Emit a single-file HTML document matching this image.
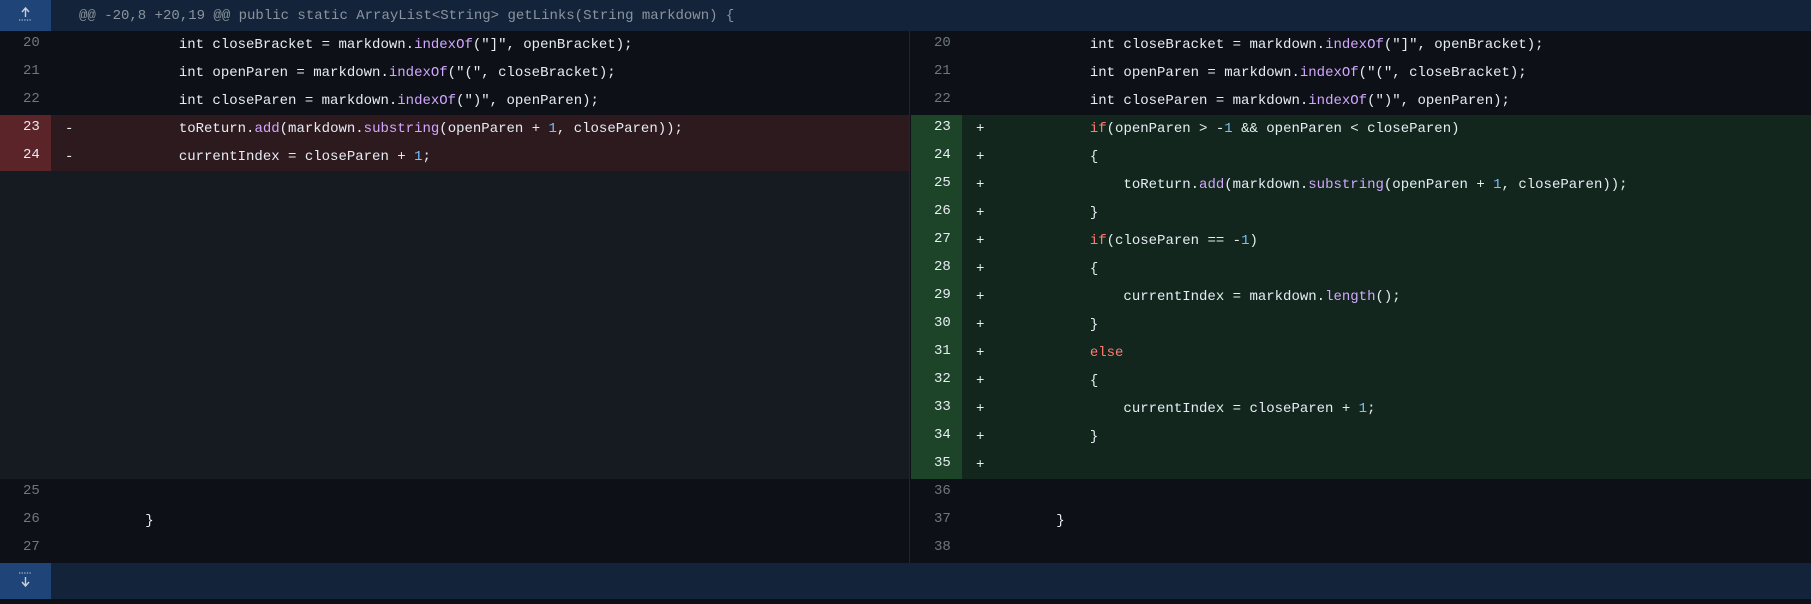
<!DOCTYPE html>
<html><head><meta charset="utf-8"><style>
*{margin:0;padding:0;box-sizing:border-box}
body{width:1811px;height:602px;background:#0d1117;overflow:hidden;font-family:"Liberation Mono",monospace;font-size:14px;color:#e6edf3}
.hdr{position:absolute;left:0;width:1811px;background:#132339}
.btn{position:absolute;left:0;top:0;width:51px;height:100%;background:#1f4478}
.ht{position:absolute;left:79px;top:8px;color:#8b949e;white-space:pre}
.side{position:absolute;top:31px;height:532px}
.row{height:28px;position:relative;white-space:pre}
.n{position:absolute;left:0;top:0;width:51px;height:28px;color:#6e7681;padding-left:23px;line-height:24px}
.s{position:absolute;left:65px;top:0;line-height:28px}
.c{position:absolute;left:78px;top:0;line-height:28px}
.del{background:#2d1a1f}.del .n{background:#5a2428;color:#e6edf3}
.add{background:#12261e}.add .n{background:#1d4428;color:#e6edf3}
.fill{background:#161b22}
.k{color:#d2a8ff}.r{color:#ff7b72}.b{color:#79c0ff}
</style></head><body>
<div class="hdr" style="top:0;height:31px"><div class="btn"><svg width="51" height="31"><path d="M25.5 9v8M22 12l3.5-4 3.5 4" stroke="#c9d1d9" stroke-width="1.4" fill="none"/><path d="M19 20h13" stroke="#c9d1d9" stroke-width="1" stroke-dasharray="1.3 1.3"/></svg></div><div class="ht">@@ -20,8 +20,19 @@ public static ArrayList&lt;String&gt; getLinks(String markdown) {</div></div>

<div class="side" style="left:0;width:910px;border-right:1px solid #21262d">
<div class="row"><div class="n">20</div><div class="c">            int closeBracket = markdown.<span class="k">indexOf</span>("]", openBracket);</div></div>
<div class="row"><div class="n">21</div><div class="c">            int openParen = markdown.<span class="k">indexOf</span>("(", closeBracket);</div></div>
<div class="row"><div class="n">22</div><div class="c">            int closeParen = markdown.<span class="k">indexOf</span>(")", openParen);</div></div>
<div class="row del"><div class="n">23</div><div class="s">-</div><div class="c">            toReturn.<span class="k">add</span>(markdown.<span class="k">substring</span>(openParen + <span class="b">1</span>, closeParen));</div></div>
<div class="row del"><div class="n">24</div><div class="s">-</div><div class="c">            currentIndex = closeParen + <span class="b">1</span>;</div></div>
<div class="fill" style="height:308px"></div>
<div class="row"><div class="n">25</div></div>
<div class="row"><div class="n">26</div><div class="c">        }</div></div>
<div class="row"><div class="n">27</div></div>
</div>

<div class="side" style="left:911px;width:900px">
<div class="row"><div class="n">20</div><div class="c">            int closeBracket = markdown.<span class="k">indexOf</span>("]", openBracket);</div></div>
<div class="row"><div class="n">21</div><div class="c">            int openParen = markdown.<span class="k">indexOf</span>("(", closeBracket);</div></div>
<div class="row"><div class="n">22</div><div class="c">            int closeParen = markdown.<span class="k">indexOf</span>(")", openParen);</div></div>
<div class="row add"><div class="n">23</div><div class="s">+</div><div class="c">            <span class="r">if</span>(openParen &gt; -<span class="b">1</span> &amp;&amp; openParen &lt; closeParen)</div></div>
<div class="row add"><div class="n">24</div><div class="s">+</div><div class="c">            {</div></div>
<div class="row add"><div class="n">25</div><div class="s">+</div><div class="c">                toReturn.<span class="k">add</span>(markdown.<span class="k">substring</span>(openParen + <span class="b">1</span>, closeParen));</div></div>
<div class="row add"><div class="n">26</div><div class="s">+</div><div class="c">            }</div></div>
<div class="row add"><div class="n">27</div><div class="s">+</div><div class="c">            <span class="r">if</span>(closeParen == -<span class="b">1</span>)</div></div>
<div class="row add"><div class="n">28</div><div class="s">+</div><div class="c">            {</div></div>
<div class="row add"><div class="n">29</div><div class="s">+</div><div class="c">                currentIndex = markdown.<span class="k">length</span>();</div></div>
<div class="row add"><div class="n">30</div><div class="s">+</div><div class="c">            }</div></div>
<div class="row add"><div class="n">31</div><div class="s">+</div><div class="c">            <span class="r">else</span></div></div>
<div class="row add"><div class="n">32</div><div class="s">+</div><div class="c">            {</div></div>
<div class="row add"><div class="n">33</div><div class="s">+</div><div class="c">                currentIndex = closeParen + <span class="b">1</span>;</div></div>
<div class="row add"><div class="n">34</div><div class="s">+</div><div class="c">            }</div></div>
<div class="row add"><div class="n">35</div><div class="s">+</div></div>
<div class="row"><div class="n">36</div></div>
<div class="row"><div class="n">37</div><div class="c">        }</div></div>
<div class="row"><div class="n">38</div></div>
</div>

<div class="hdr" style="top:563px;height:36px"><div class="btn"><svg width="51" height="36"><path d="M19 10h13" stroke="#c9d1d9" stroke-width="1" stroke-dasharray="1.3 1.3"/><path d="M25.5 14v9M22 19l3.5 4 3.5-4" stroke="#c9d1d9" stroke-width="1.4" fill="none"/></svg></div></div>
</body></html>
